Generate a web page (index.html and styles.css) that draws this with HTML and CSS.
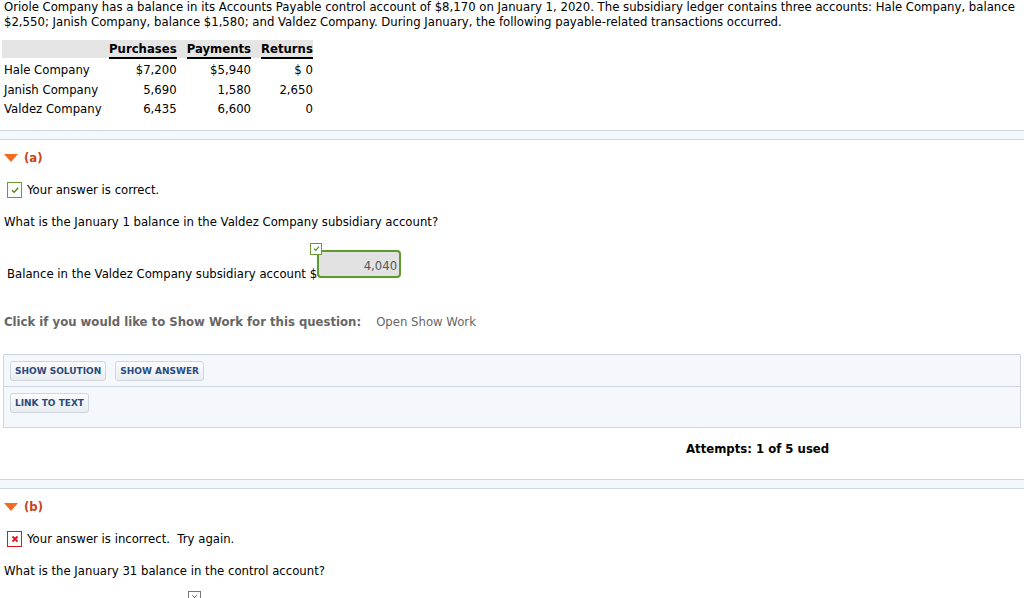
FILE: index.html
```html
<!DOCTYPE html>
<html>
<head>
<meta charset="utf-8">
<link rel="stylesheet" href="styles.css">
</head>
<body>
<p class="intro">Oriole Company has a balance in its Accounts Payable control account of $8,170 on January 1, 2020. The subsidiary ledger contains three accounts: Hale Company, balance $2,550; Janish Company, balance $1,580; and Valdez Company. During January, the following payable-related transactions occurred.</p>

<table class="data">
  <thead>
    <tr>
      <th class="lab"></th>
      <th class="c1"><span>Purchases</span></th>
      <th><span>Payments</span></th>
      <th><span>Returns</span></th>
    </tr>
  </thead>
  <tbody>
    <tr><td class="lab">Hale Company</td><td class="c1">$7,200</td><td>$5,940</td><td>$ 0</td></tr>
    <tr><td class="lab">Janish Company</td><td class="c1">5,690</td><td>1,580</td><td>2,650</td></tr>
    <tr><td class="lab">Valdez Company</td><td class="c1">6,435</td><td>6,600</td><td>0</td></tr>
  </tbody>
</table>

<div class="sep"></div>

<section class="part">
  <h2 class="part-title"><span class="tri"></span>(a)</h2>
  <div class="status"><span class="ico ok"><svg viewBox="0 0 12 12" width="12" height="12"><path d="M3 6.2 L5.2 8.3 L9.2 3.8" fill="none" stroke="#4f8a1e" stroke-width="1.4"/></svg></span>Your answer is correct.</div>
  <p class="q">What is the January 1 balance in the Valdez Company subsidiary account?</p>
  <div class="answer">
    <span class="alabel">Balance in the Valdez Company subsidiary account $</span>
    <span class="field">
      <span class="mini ok"><svg viewBox="0 0 10 10" width="9" height="9"><path d="M2.2 5.2 L4.2 7 L7.8 3" fill="none" stroke="#4f8a1e" stroke-width="1.3"/></svg></span>
      <span class="input">4,040</span>
    </span>
  </div>
  <div class="showwork"><b>Click if you would like to Show Work for this question:</b><span class="open">Open Show Work</span></div>
  <div class="box">
    <div class="brow"><span class="btn">SHOW SOLUTION</span><span class="btn">SHOW ANSWER</span></div>
    <div class="brow last"><span class="btn">LINK TO TEXT</span></div>
  </div>
  <div class="attempts">Attempts: 1 of 5 used</div>
</section>

<div class="sep sep2"></div>

<section class="part">
  <h2 class="part-title"><span class="tri"></span>(b)</h2>
  <div class="status"><span class="ico bad"><svg viewBox="0 0 12 12" width="12" height="12"><path d="M3.5 3.5 L8.5 8.5 M8.5 3.5 L3.5 8.5" fill="none" stroke="#e0131f" stroke-width="1.8"/></svg></span>Your answer is incorrect.&nbsp; Try again.</div>
  <p class="q">What is the January 31 balance in the control account?</p>
  <div class="next"><span class="mini2"><svg viewBox="0 0 10 10" width="9" height="9"><path d="M2.5 2.5 L7.5 7.5 M7.5 2.5 L2.5 7.5" fill="none" stroke="#555" stroke-width="1"/></svg></span></div>
</section>
</body>
</html>
```

FILE: styles.css
```css
html, body {
  margin: 0;
  padding: 0;
  background: #fff;
}
body {
  font-family: "DejaVu Sans", Verdana, sans-serif;
  font-size: 11.7px;
  color: #000;
  overflow: hidden;
}
.intro {
  margin: 0;
  padding: 0 4px;
  line-height: 15px;
}
.data {
  margin: 10px 0 0 2px;
  border-collapse: separate;
  border-spacing: 0;
  white-space: nowrap;
}
.data th {
  font-weight: bold;
  text-align: right;
  padding: 1px 0 0 10px;
  background: #e5e5e5;
  height: 17px;
  vertical-align: middle;
}
.data th span {
  display: block;
  line-height: 15px;
  box-shadow: 0 2px 0 #000;
}
.data th.lab {
  width: 101px;
  padding: 0;
}
.data th.c1, .data td.c1 {
  padding-left: 6px;
}
.data td {
  text-align: right;
  padding: 0 0 0 10px;
  height: 19.5px;
  line-height: 19px;
}
.data td.lab {
  text-align: left;
  padding-left: 2px;
}
.data tbody tr:first-child td {
  padding-top: 3px;
}
.sep {
  margin-top: 10px;
  height: 8px;
  background: #f4f7fb;
  border-top: 1px solid #ccd5e1;
  border-bottom: 1px solid #ccd5e1;
}
.sep2 {
  margin-top: 22px;
}
.part {
  padding: 0 4px;
}
.part-title {
  margin: 10px 0 0;
  font-size: 11.7px;
  font-weight: bold;
  color: #c9431c;
  display: flex;
  align-items: center;
  height: 16px;
}
.tri {
  width: 0;
  height: 0;
  border-left: 7px solid transparent;
  border-right: 7px solid transparent;
  border-top: 8px solid #f26b21;
  margin-right: 6px;
}
.status {
  margin-top: 15px;
  display: flex;
  align-items: center;
  height: 18px;
  padding-left: 3px;
}
.ico {
  width: 13px;
  height: 14px;
  border: 1px solid #6a9a31;
  background: #fff;
  display: flex;
  align-items: center;
  justify-content: center;
  margin-right: 5px;
}
.ico.bad {
  border-color: #e0131f;
}
.q {
  margin: 15px 0 0;
  line-height: 16px;
}
.answer {
  margin-top: 13px;
  display: flex;
  align-items: flex-end;
  padding-left: 3px;
}
.alabel {
  line-height: 16px;
  margin-bottom: -4px;
}
.field {
  position: relative;
  display: block;
}
.input {
  display: block;
  width: 78px;
  height: 17px;
  border: 2px solid #5e9a2c;
  border-radius: 4px;
  background: #e2e2e2;
  color: #555;
  text-align: right;
  padding: 7px 2px 0 0;
  margin-top: 7px;
  box-sizing: content-box;
  font-size: 11.7px;
  line-height: 14px;
}
.mini {
  position: absolute;
  left: -7px;
  top: 0;
  width: 10px;
  height: 10px;
  border: 1px solid #6a9a31;
  background: #fff;
  display: flex;
  align-items: center;
  justify-content: center;
}
.showwork {
  margin-top: 36px;
  color: #666;
  line-height: 16px;
}
.showwork b {
  font-weight: bold;
}
.open {
  margin-left: 15px;
}
.box {
  margin: 24px -1px 0;
  border: 1px solid #cdd6e2;
  background: #f4f7fb;
}
.brow {
  padding: 6px 6px 5px;
  border-bottom: 1px solid #cdd6e2;
  display: flex;
  gap: 9px;
}
.brow.last {
  border-bottom: 0;
  padding-bottom: 14px;
}
.btn {
  display: inline-block;
  font-size: 9px;
  font-weight: bold;
  color: #2b4a7e;
  background: linear-gradient(#fbfcfd, #e9edf1);
  border: 1px solid #cfd6de;
  border-radius: 3px;
  padding: 0 4px;
  height: 18px;
  line-height: 18px;
}
.attempts {
  margin-top: 13px;
  font-weight: bold;
  padding-left: 682px;
  line-height: 16px;
}
.next {
  padding-left: 184px;
  margin-top: 12px;
  height: 12px;
}
.mini2 {
  display: inline-flex;
  width: 11px;
  height: 11px;
  border: 1px solid #777;
  align-items: center;
  justify-content: center;
  background: #fff;
}
```
